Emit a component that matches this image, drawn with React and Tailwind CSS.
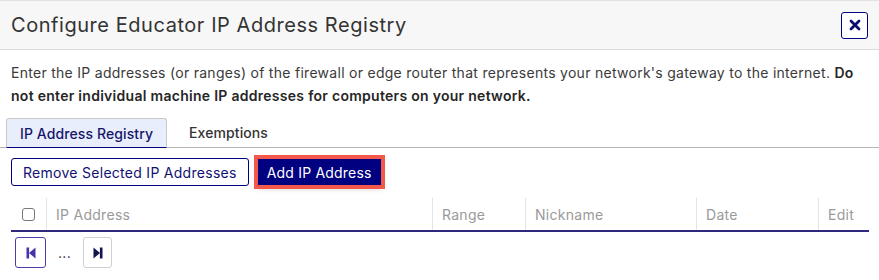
export default function App() {
  const font = { fontFamily: "Inter, 'Noto Sans', sans-serif" };
  return (
    <div className="w-[879px] h-[280px] bg-white overflow-hidden tracking-[0.28px]" style={font}>
      <div className="h-[50px] bg-[#f7f7f7] border-t border-[#e2e2e2] border-b border-b-[#dcdcdc] flex items-center justify-between pl-[11px] pr-[11px]">
        <h1 className="text-[20px] leading-none text-[#333] tracking-[0.55px]">Configure Educator IP Address Registry</h1>
        <button className="w-[27px] h-[27px] bg-white border border-[#000080] rounded-[3px] flex items-center justify-center">
          <svg width="12" height="12" viewBox="0 0 12 12">
            <path d="M2 2 L10 10 M10 2 L2 10" stroke="#0d0d6e" strokeWidth="2.8" strokeLinecap="round" />
          </svg>
        </button>
      </div>
      <p className="px-[11px] pt-[11px] text-[14px] leading-[23px] text-[#3a3a3a] whitespace-nowrap">
        Enter the IP addresses (or ranges) of the firewall or edge router that represents your network's gateway to the internet.{" "}
        <span className="font-semibold text-[#262626]">Do</span>
        <br />
        <span className="font-semibold text-[#262626]">not enter individual machine IP addresses for computers on your network.</span>
      </p>
      <div className="mt-[10px] flex items-end border-b border-[#b5b5b5] pl-[6px]">
        <div className="h-[30px] px-[13px] flex items-center bg-[#e8eefb] border border-[#c9c9c9] border-b-[#000080] rounded-t-[3px] -mb-px text-[14px] font-medium text-[#16166b] tracking-[0.1px]">
          IP Address Registry
        </div>
        <div className="h-[30px] ml-[9px] px-[13px] flex items-center text-[14px] font-medium text-[#333] tracking-[0.1px]">
          Exemptions
        </div>
      </div>
      <div className="mt-[10px] pl-[11px] flex items-center gap-[9px]">
        <button className="h-[28px] px-[11px] border border-[#000080] rounded-[3px] bg-white text-[14px] text-[#111173]">
          Remove Selected IP Addresses
        </button>
        <button className="h-[26px] px-[9px] bg-[#000080] text-white text-[14px] tracking-[0.2px] outline-[4px] outline-solid outline-[#f4584a] shadow-[0_3px_6px_rgba(0,0,0,0.25)]">
          Add IP Address
        </button>
      </div>
      <div className="mt-[12px] ml-[11px] w-[858px] flex h-[34px] border-b-2 border-[#2d2a7e] text-[14px] text-[#9a9a9a]">
        <div className="w-[36px] flex items-center justify-center border-r border-[#e3e3e3]">
          <div className="w-[13px] h-[13px] border border-[#777] rounded-[3px]"></div>
        </div>
        <div className="w-[386px] flex items-center pl-[9px] border-r border-[#e3e3e3]">IP Address</div>
        <div className="w-[93px] flex items-center pl-[9px] border-r border-[#e3e3e3]">Range</div>
        <div className="w-[171px] flex items-center pl-[9px] border-r border-[#e3e3e3]">Nickname</div>
        <div className="w-[122px] flex items-center pl-[9px] border-r border-[#e3e3e3]">Date</div>
        <div className="flex-1 flex items-center pl-[9px]">Edit</div>
      </div>
      <div className="mt-[5px] pl-[15px] flex items-center">
        <button className="w-[31px] h-[31px] border border-[#4b3fb0] rounded-[3px] flex items-center justify-center">
          <svg width="10" height="12" viewBox="0 0 10 12">
            <rect x="0.5" y="0.5" width="2.6" height="11" fill="#4535a8" />
            <path d="M9.5 0.5 L9.5 11.5 L3 6 Z" fill="#4535a8" />
          </svg>
        </button>
        <span className="w-[37px] text-center text-[14px] text-[#333] leading-none">...</span>
        <button className="w-[29px] h-[31px] border border-[#d0d0d0] rounded-[3px] flex items-center justify-center">
          <svg width="10" height="12" viewBox="0 0 10 12">
            <path d="M0.5 0.5 L0.5 11.5 L7 6 Z" fill="#14144f" />
            <rect x="6.9" y="0.5" width="2.6" height="11" fill="#14144f" />
          </svg>
        </button>
      </div>
    </div>
  );
}
